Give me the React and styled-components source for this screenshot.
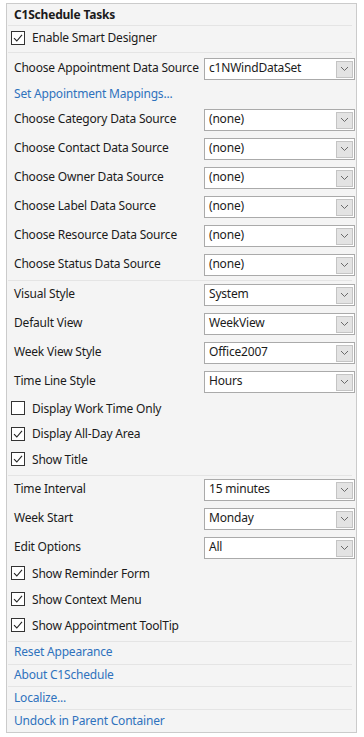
import React from "react";
import styled, { createGlobalStyle } from "styled-components";

const GlobalStyle = createGlobalStyle`
  html, body {
    margin: 0;
    padding: 0;
    background: #ffffff;
  }
  body {
    font-family: "Noto Sans", "Open Sans", sans-serif;
    font-size: 12px;
    letter-spacing: -0.2px;
    color: #1b1b1b;
  }
`;

const Panel = styled.div`
  box-sizing: border-box;
  margin: 3px 0 0 6px;
  width: 351px;
  height: 730px;
  border: 1px solid #cbcbcb;
  background: #f4f4f4;
  display: flex;
  flex-direction: column;
`;

const Section = styled.div`
  display: flex;
  flex-direction: column;
  padding-top: ${(p) => p.$top || 0}px;
`;

const Divider = styled.div`
  height: 1px;
  margin: 0 4px 0 1px;
  background: #e4e4e4;
`;

const Title = styled.div`
  height: 21px;
  display: flex;
  align-items: center;
  padding-left: 7px;
  font-weight: 700;
`;

const Row = styled.div`
  height: 29px;
  display: flex;
  align-items: center;
  padding: 0 1px 0 7px;
`;

const Label = styled.span`
  flex: 1;
  white-space: nowrap;
  line-height: 16px;
  padding-bottom: 2px;
`;

const Select = styled.div`
  box-sizing: border-box;
  width: 151px;
  height: 22px;
  background: #ffffff;
  border: 1px solid #aaaaaa;
  display: flex;
  align-items: center;
  padding: 0 1px 0 4px;
`;

const SelectText = styled.span`
  flex: 1;
  line-height: 16px;
  padding-bottom: 2px;
`;

const SelectButton = styled.span`
  box-sizing: border-box;
  width: 17px;
  height: 17px;
  background: #e3e3e3;
  border: 1px solid #c4c4c4;
  display: flex;
  align-items: center;
  justify-content: center;
`;

const CheckRow = styled.label`
  height: 26px;
  display: flex;
  align-items: center;
  padding: 0 0 ${(p) => p.$lift || 0}px 4px;
  box-sizing: border-box;
  gap: 7px;
`;

const Box = styled.span`
  box-sizing: border-box;
  width: 14px;
  height: 14px;
  border: 1px solid #333333;
  background: #ffffff;
  display: flex;
  align-items: center;
  justify-content: center;
`;

const LinkRow = styled.div`
  box-sizing: border-box;
  height: 22px;
  display: flex;
  align-items: center;
  padding: 0 0 2px 7px;
  color: #2f72bd;
`;

function Chevron() {
  return (
    <svg width="9" height="6" viewBox="0 0 9 6">
      <path d="M1 1 L4.5 4.5 L8 1" fill="none" stroke="#6a6a6a" strokeWidth="1" />
    </svg>
  );
}

function Dropdown({ label, value }) {
  return (
    <Row>
      <Label>{label}</Label>
      <Select>
        <SelectText>{value}</SelectText>
        <SelectButton>
          <Chevron />
        </SelectButton>
      </Select>
    </Row>
  );
}

function Check({ label, checked, lift }) {
  return (
    <CheckRow $lift={lift}>
      <Box>
        {checked && (
          <svg width="12" height="12" viewBox="0 0 12 12">
            <path d="M2 6.2 L4.8 9 L10 2.8" fill="none" stroke="#222" strokeWidth="1.1" />
          </svg>
        )}
      </Box>
      <span>{label}</span>
    </CheckRow>
  );
}

export default function App() {
  return (
    <>
      <GlobalStyle />
      <Panel>
        <Title>C1Schedule Tasks</Title>
        <Divider />
        <Section>
          <Check label="Enable Smart Designer" checked lift={2} />
        </Section>
        <Divider />
        <Section $top={2}>
          <Dropdown label="Choose Appointment Data Source" value="c1NWindDataSet" />
          <LinkRow>Set Appointment Mappings...</LinkRow>
          <Dropdown label="Choose Category Data Source" value="(none)" />
          <Dropdown label="Choose Contact Data Source" value="(none)" />
          <Dropdown label="Choose Owner Data Source" value="(none)" />
          <Dropdown label="Choose Label Data Source" value="(none)" />
          <Dropdown label="Choose Resource Data Source" value="(none)" />
          <Dropdown label="Choose Status Data Source" value="(none)" />
        </Section>
        <Divider />
        <Section>
          <Dropdown label="Visual Style" value="System" />
          <Dropdown label="Default View" value="WeekView" />
          <Dropdown label="Week View Style" value="Office2007" />
          <Dropdown label="Time Line Style" value="Hours" />
          <Check label="Display Work Time Only" lift={3} />
          <Check label="Display All-Day Area" checked lift={4} />
          <Check label="Show Title" checked lift={5} />
        </Section>
        <Divider />
        <Section>
          <Dropdown label="Time Interval" value="15 minutes" />
          <Dropdown label="Week Start" value="Monday" />
          <Dropdown label="Edit Options" value="All" />
          <Check label="Show Reminder Form" checked lift={5} />
          <Check label="Show Context Menu" checked lift={5} />
          <Check label="Show Appointment ToolTip" checked lift={5} />
        </Section>
        <Divider />
        <LinkRow>Reset Appearance</LinkRow>
        <Divider />
        <LinkRow>About C1Schedule</LinkRow>
        <Divider />
        <LinkRow>Localize...</LinkRow>
        <Divider />
        <LinkRow>Undock in Parent Container</LinkRow>
      </Panel>
    </>
  );
}
